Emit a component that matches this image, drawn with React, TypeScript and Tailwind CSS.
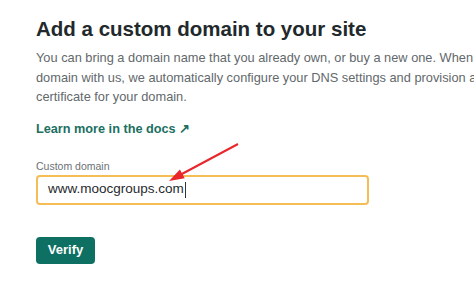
import React from "react";

export default function App() {
  return (
    <div className="w-[474px] h-[292px] bg-white overflow-hidden relative" style={{ fontFamily: "'Liberation Sans', Arial, sans-serif" }}>
      <div className="pl-[36px] pt-[15px] w-[700px]">
        <h1 className="text-[20.5px] leading-[28px] font-bold text-[#22292c]">Add a custom domain to your site</h1>
        <p className="mt-[5px] text-[12.8px] leading-[19.5px] text-[#62686b] whitespace-nowrap">
          You can bring a domain name that you already own, or buy a new one. When you register a new
          <br />
          domain with us, we automatically configure your DNS settings and provision a free HTTPS
          <br />
          certificate for your domain.
        </p>
        <div className="mt-[12px] text-[12.7px] leading-[20px] font-bold text-[#1c6f61]">Learn more in the docs ↗</div>
        <div className="mt-[20px] text-[10.5px] leading-[14px] text-[#6b7175]">Custom domain</div>
        <div className="mt-[2px] w-[333px] h-[30px] border-2 border-[#f5bd55] rounded-[4px] flex items-center pl-[10px] text-[13.5px] text-[#1f2a2e]">
          www.moocgroups.com<span className="inline-block w-[1px] h-[16px] bg-[#333] ml-[1px]"></span>
        </div>
        <button className="mt-[32px] w-[59px] h-[27px] rounded-[4px] bg-[#0e7063] text-white text-[13px] font-bold">Verify</button>
      </div>
      <svg className="absolute left-0 top-0" width="474" height="292">
        <line x1="238" y1="144" x2="180" y2="175" stroke="#e8262b" strokeWidth="2" />
        <polygon points="169,181 179.9,169.5 184.7,178.3" fill="#e8262b" />
      </svg>
    </div>
  );
}
